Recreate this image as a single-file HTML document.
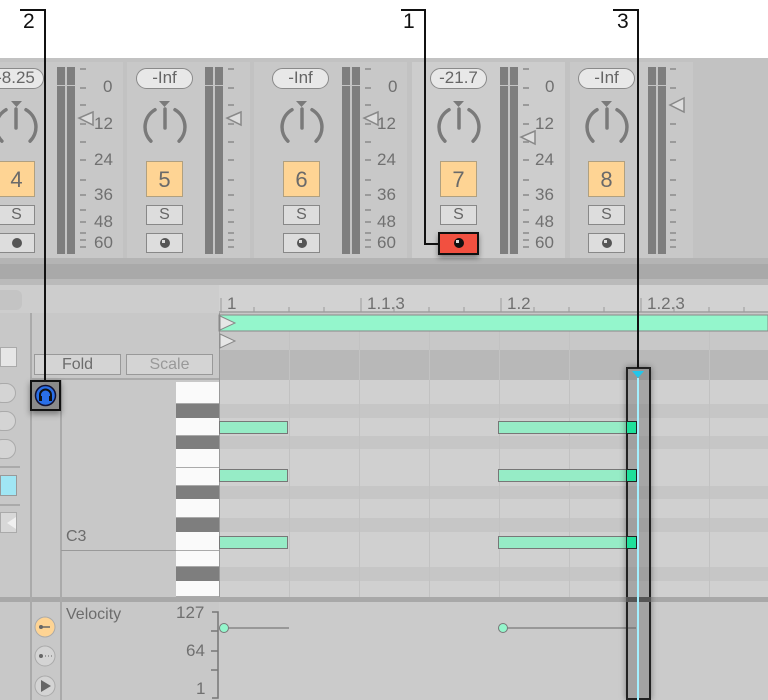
<!DOCTYPE html>
<html><head><meta charset="utf-8"><style>
*{margin:0;padding:0;box-sizing:border-box}
body{width:768px;height:700px;overflow:hidden;background:#fff;position:relative;font-family:"Liberation Sans",sans-serif;color:#707070}
.a{position:absolute}
.pill{position:absolute;top:68px;width:57px;height:21px;border:1.5px solid #8a8a8a;border-radius:11px;background:#e8e8e8;font-size:17px;text-align:center;line-height:18px;color:#666}
.num{position:absolute;top:161px;width:37px;height:36px;background:#fed494;border:1px solid #b0a080;font-size:22px;text-align:center;line-height:35px;color:#6a6a6a}
.sb{position:absolute;top:205px;width:37px;height:20px;background:#ddd;border:1px solid #888;font-size:16px;text-align:center;line-height:18px;color:#666}
.rb{position:absolute;top:233px;width:37px;height:20px;background:#ddd;border:1px solid #888}
.rb i{position:absolute;left:13px;top:4px;width:10px;height:10px;border-radius:50%;background:#555}
.rb i.h{background:linear-gradient(90deg,#555 50%,#555 50%);border:2px solid #555;background:#555}
.rb i.h:after{content:"";position:absolute;left:0;top:0;width:3px;height:3px;background:#ddd}
.met{position:absolute;top:67px;width:18px;height:187px;background:#7e7e7e}
.met:after{content:"";position:absolute;left:8px;top:0;width:2px;height:100%;background:#c4c4c4}
.met:before{content:"";position:absolute;left:0;top:18px;width:100%;height:1px;background:#c4c4c4}
.sc{position:absolute;font-size:17px;color:#707070}
.k{position:absolute;left:176px;width:43px}
.w{background:#fafafa;border-bottom:1px solid #aaa}
.b{background:#7e7e7e}
.note{position:absolute;height:13px;background:#96ecc6;border:1px solid #777}
.sq{position:absolute;width:11px;height:13px;background:#1ee09a;border:1.5px solid #222}
.vl{position:absolute;top:331px;width:1px;height:269px;background:#c2c2c2}
.lab{position:absolute;font-size:21px;color:#111}
.ln{position:absolute;background:#111}
</style></head><body>
<div class="a" style="left:0;top:58px;width:768px;height:204px;background:#c2c2c2"></div>
<div class="a" style="left:0;top:62px;width:123px;height:196px;background:#c8c8c8"></div>
<div class="a" style="left:127px;top:62px;width:123px;height:196px;background:#c8c8c8"></div>
<div class="a" style="left:254px;top:62px;width:153px;height:196px;background:#c8c8c8"></div>
<div class="a" style="left:412px;top:62px;width:153px;height:196px;background:#cdcdcd"></div>
<div class="a" style="left:570px;top:62px;width:123px;height:196px;background:#c8c8c8"></div>
<div class="a" style="left:0;top:258px;width:768px;height:6px;background:#b4b4b4"></div>
<div class="a" style="left:0;top:264px;width:768px;height:15px;background:#a9a9a9"></div>
<div class="a" style="left:0;top:279px;width:768px;height:6px;background:#bababa"></div>

<div class="pill" style="left:-13px">-8.25</div>
<div class="pill" style="left:136px">-Inf</div>
<div class="pill" style="left:272px">-Inf</div>
<div class="pill" style="left:430px">-21.7</div>
<div class="pill" style="left:578px">-Inf</div>

<svg class="a" style="left:0;top:0" width="768" height="260">
<g fill="none" stroke="#7a7a7a" stroke-width="3.5" stroke-linecap="round">
<path d="M6,109.7A20,20 0 0 0 1.9,141.1M26,109.7A20,20 0 0 1 30.1,141.1"/><line x1="16" y1="109" x2="16" y2="128"/>
<path d="M155,109.7A20,20 0 0 0 150.9,141.1M175,109.7A20,20 0 0 1 179.1,141.1"/><line x1="165" y1="109" x2="165" y2="128"/>
<path d="M292,109.7A20,20 0 0 0 287.9,141.1M312,109.7A20,20 0 0 1 316.1,141.1"/><line x1="302" y1="109" x2="302" y2="128"/>
<path d="M449,109.7A20,20 0 0 0 444.9,141.1M469,109.7A20,20 0 0 1 473.1,141.1"/><line x1="459" y1="109" x2="459" y2="128"/>
<path d="M597,109.7A20,20 0 0 0 592.9,141.1M617,109.7A20,20 0 0 1 621.1,141.1"/><line x1="607" y1="109" x2="607" y2="128"/>
</g>
<g fill="#7a7a7a"><path d="M11,101h11l-5.5,6z"/><path d="M159,101h11l-5.5,6z"/><path d="M296,101h11l-5.5,6z"/><path d="M453,101h11l-5.5,6z"/><path d="M601,101h11l-5.5,6z"/></g>
<g fill="#ddd" stroke="#888" stroke-width="1.5"><path d="M93,112l-14,6l14,7z"/><path d="M241,112l-14,6l14,7z"/><path d="M378,112l-14,6l14,7z"/><path d="M535,131l-14,6l14,7z"/><path d="M684,98l-14,7l14,7z"/></g>
</svg>

<div class="num" style="left:-2px">4</div><div class="num" style="left:146px">5</div><div class="num" style="left:283px">6</div><div class="num" style="left:440px">7</div><div class="num" style="left:588px">8</div>
<div class="sb" style="left:-2px">S</div><div class="sb" style="left:146px">S</div><div class="sb" style="left:283px">S</div><div class="sb" style="left:440px">S</div><div class="sb" style="left:588px">S</div>
<div class="rb" style="left:-2px"><i></i></div><div class="rb" style="left:146px"><i class="h"></i></div><div class="rb" style="left:283px"><i class="h"></i></div>
<div class="rb" style="left:438px;top:232px;width:41px;height:23px;background:#f25040;border:2px solid #111;box-shadow:0 3px 5px rgba(0,0,0,.4)"><i class="h" style="left:14px;top:4px;background:#111;border-color:#111"></i></div>
<div class="rb" style="left:588px"><i class="h"></i></div>

<div class="met" style="left:57px"></div><div class="met" style="left:205px"></div><div class="met" style="left:342px"></div><div class="met" style="left:500px"></div><div class="met" style="left:648px"></div>

<div class="sc" style="left:103px;top:77px">0</div><div class="sc" style="left:94px;top:114px">12</div><div class="sc" style="left:94px;top:150px">24</div><div class="sc" style="left:94px;top:185px">36</div><div class="sc" style="left:94px;top:212px">48</div><div class="sc" style="left:94px;top:233px">60</div>
<div class="sc" style="left:388px;top:77px">0</div><div class="sc" style="left:377px;top:114px">12</div><div class="sc" style="left:377px;top:150px">24</div><div class="sc" style="left:377px;top:185px">36</div><div class="sc" style="left:377px;top:212px">48</div><div class="sc" style="left:377px;top:233px">60</div>
<div class="sc" style="left:545px;top:77px">0</div><div class="sc" style="left:535px;top:114px">12</div><div class="sc" style="left:535px;top:150px">24</div><div class="sc" style="left:535px;top:185px">36</div><div class="sc" style="left:535px;top:212px">48</div><div class="sc" style="left:535px;top:233px">60</div>

<svg class="a" style="left:0;top:0" width="768" height="260"><g stroke="#8a8a8a" stroke-width="1.5">
<path d="M80,69h6M80,88h6M80,105h6M80,124h6M80,142h6M80,160h6M80,180h6M80,195h6M80,210h6M80,222h6M80,233h6M80,240h6M80,247h6"/>
<path d="M228,69h6M228,88h6M228,105h6M228,124h6M228,142h6M228,160h6M228,180h6M228,195h6M228,210h6M228,222h6M228,233h6M228,240h6M228,247h6"/>
<path d="M365,69h6M365,88h6M365,105h6M365,124h6M365,142h6M365,160h6M365,180h6M365,195h6M365,210h6M365,222h6M365,233h6M365,240h6M365,247h6"/>
<path d="M523,69h6M523,88h6M523,105h6M523,124h6M523,142h6M523,160h6M523,180h6M523,195h6M523,210h6M523,222h6M523,233h6M523,240h6M523,247h6"/>
<path d="M670,69h6M670,88h6M670,124h6M670,142h6M670,160h6M670,180h6M670,195h6M670,210h6M670,222h6M670,233h6M670,240h6M670,247h6"/>
</g></svg>

<div class="a" style="left:0;top:285px;width:768px;height:415px;background:#c8c8c8"></div>
<div class="a" style="left:0;top:285px;width:219px;height:28px;background:#cdcdcd"></div>
<div class="a" style="left:0;top:290px;width:22px;height:20px;border-radius:0 6px 6px 0;background:#c4c4c4"></div>
<div class="a" style="left:219px;top:285px;width:549px;height:28px;background:#d2d2d2"></div>
<div class="a" style="left:219px;top:313px;width:549px;height:37px;background:#c8c8c8"></div>
<div class="a" style="left:219px;top:350px;width:549px;height:30px;background:#b8b8b8"></div>
<div class="a" style="left:219px;top:380px;width:549px;height:220px;background:#d0d0d0"></div>
<div class="a" style="left:219px;top:404px;width:549px;height:14px;background:#c6c6c6"></div>
<div class="a" style="left:219px;top:436px;width:549px;height:13px;background:#c6c6c6"></div>
<div class="a" style="left:219px;top:486px;width:549px;height:13px;background:#c6c6c6"></div>
<div class="a" style="left:219px;top:518px;width:549px;height:14px;background:#c6c6c6"></div>
<div class="a" style="left:219px;top:567px;width:549px;height:14px;background:#c6c6c6"></div>
<div class="vl" style="left:289px"></div><div class="vl" style="left:359px"></div><div class="vl" style="left:429px"></div><div class="vl" style="left:499px"></div><div class="vl" style="left:569px"></div><div class="vl" style="left:709px"></div>
<div class="a" style="left:219px;top:313px;width:1px;height:387px;background:#999"></div>
<div class="a" style="left:0;top:597px;width:768px;height:5px;background:#a8a8a8"></div>
<div class="a" style="left:219px;top:602px;width:549px;height:98px;background:#cbcbcb"></div>

<div class="a" style="left:219px;top:311px;width:549px;height:1.5px;background:#aaa"></div>
<div class="sc" style="left:227px;top:294px">1</div>
<div class="sc" style="left:367px;top:294px">1.1.3</div>
<div class="sc" style="left:507px;top:294px">1.2</div>
<div class="sc" style="left:647px;top:294px">1.2.3</div>
<svg class="a" style="left:0;top:0" width="768" height="700"><g stroke="#999" stroke-width="1">
<path d="M221,298v14M254,307v5M289,307v5M324,307v5M361,298v14M394,307v5M429,307v5M464,307v5M501,298v14M534,307v5M569,307v5M604,307v5M641,298v14M674,307v5M709,307v5M744,307v5"/></g>
<rect x="219" y="315" width="549" height="16" fill="#94f6cc" stroke="#888" stroke-width="1"/>
<path d="M220,316l15,7l-15,7z M220,334l15,7l-15,7z" fill="#e6e6e6" stroke="#888"/>
</svg>

<div class="a" style="left:0;top:347px;width:17px;height:20px;background:#e6e6e6;border:1px solid #aaa"></div>
<div class="a" style="left:-8px;top:383px;width:24px;height:20px;border-radius:10px;background:#d4d4d4;border:1px solid #aaa"></div>
<div class="a" style="left:-8px;top:411px;width:24px;height:20px;border-radius:10px;background:#d4d4d4;border:1px solid #aaa"></div>
<div class="a" style="left:-8px;top:439px;width:24px;height:20px;border-radius:10px;background:#d4d4d4;border:1px solid #aaa"></div>
<div class="a" style="left:0;top:466px;width:20px;height:1.5px;background:#aaa"></div>
<div class="a" style="left:0;top:475px;width:17px;height:21px;background:#a0e6f4;border:1px solid #999"></div>
<div class="a" style="left:0;top:504px;width:20px;height:1.5px;background:#aaa"></div>
<div class="a" style="left:0;top:512px;width:17px;height:21px;background:#d8d8d8;border:1px solid #aaa"></div>
<svg class="a" style="left:0;top:512px" width="20" height="22"><path d="M16,5l-9,6l9,6z" fill="#f0f0f0"/></svg>
<div class="a" style="left:30px;top:313px;width:1.5px;height:387px;background:#aaa"></div>
<div class="a" style="left:60px;top:380px;width:1.5px;height:320px;background:#aaa"></div>
<div class="a" style="left:34px;top:354px;width:87px;height:21px;background:#d4d4d4;border:1px solid #999;font-size:16px;text-align:center;line-height:19px;color:#6c6c6c">Fold</div>
<div class="a" style="left:126px;top:354px;width:87px;height:21px;background:#d4d4d4;border:1px solid #999;font-size:16px;text-align:center;line-height:19px;color:#999">Scale</div>
<div class="a" style="left:30px;top:378px;width:189px;height:1.5px;background:#aaa"></div>
<div class="a" style="left:61px;top:550px;width:115px;height:1px;background:#999"></div>
<div class="a" style="left:66px;top:528px;font-size:16px;color:#6c6c6c">C3</div>

<div class="k w" style="top:382px;height:22px"></div><div class="k b" style="top:404px;height:14px"></div>
<div class="k w" style="top:418px;height:18px"></div><div class="k b" style="top:436px;height:13px"></div>
<div class="k w" style="top:449px;height:19px"></div><div class="k w" style="top:468px;height:18px"></div>
<div class="k b" style="top:486px;height:13px"></div><div class="k w" style="top:499px;height:19px"></div>
<div class="k b" style="top:518px;height:14px"></div><div class="k w" style="top:532px;height:19px"></div>
<div class="k w" style="top:551px;height:16px"></div><div class="k b" style="top:567px;height:14px"></div>
<div class="k w" style="top:581px;height:16px"></div>

<div class="note" style="left:219px;top:421px;width:69px"></div>
<div class="note" style="left:219px;top:469px;width:69px"></div>
<div class="note" style="left:219px;top:536px;width:69px"></div>
<div class="note" style="left:498px;top:421px;width:132px"></div>
<div class="note" style="left:498px;top:469px;width:132px"></div>
<div class="note" style="left:498px;top:536px;width:132px"></div>

<div class="a" style="left:66px;top:606px;font-size:16px;color:#6c6c6c">Velocity</div>
<div class="sc" style="left:176px;top:603px">127</div>
<div class="sc" style="left:186px;top:641px">64</div>
<div class="sc" style="left:196px;top:679px">1</div>
<svg class="a" style="left:0;top:0" width="768" height="700">
<path d="M212,612h6v86h-6M211,651h7M211,670h7M211,631h7" fill="none" stroke="#777" stroke-width="1.5"/>
<line x1="224" y1="628" x2="289" y2="628" stroke="#666"/><circle cx="224" cy="628" r="4.5" fill="#94f6cc" stroke="#777"/>
<line x1="503" y1="628" x2="636" y2="628" stroke="#666"/><circle cx="503" cy="628" r="4.5" fill="#94f6cc" stroke="#777"/>
<circle cx="45" cy="627" r="10" fill="#fed494" stroke="#aaa"/><path d="M40,627h10" stroke="#666" stroke-width="1.5"/><circle cx="41" cy="627" r="2" fill="#666"/>
<circle cx="45" cy="656" r="10" fill="#d4d4d4" stroke="#aaa"/><circle cx="41" cy="656" r="2" fill="#666"/><path d="M45,656h1M48,656h1M51,656h1" stroke="#666"/>
<circle cx="45" cy="686" r="10" fill="#d4d4d4" stroke="#aaa"/><path d="M41,680l10,6l-10,6z" fill="#666"/>
</svg>

<div class="a" style="left:626px;top:367px;width:25px;height:333px;background:rgba(90,90,90,.35);border:2px solid #222;box-shadow:0 0 6px rgba(0,0,0,.4)"></div>
<div class="a" style="left:626px;top:597px;width:25px;height:5px;background:#555"></div>
<div class="a" style="left:637px;top:378px;width:2px;height:322px;background:#a4f0ff"></div>
<svg class="a" style="left:630px;top:369px" width="16" height="10"><path d="M2,2h12l-6,7z" fill="#22c6ea"/></svg>
<div class="sq" style="left:626px;top:421px"></div><div class="sq" style="left:626px;top:469px"></div><div class="sq" style="left:626px;top:536px"></div>

<div class="a" style="left:30px;top:380px;width:31px;height:31px;background:#8a8a8a;border:2px solid #111;box-shadow:0 3px 6px rgba(0,0,0,.4)"></div>
<svg class="a" style="left:30px;top:380px" width="31" height="31"><circle cx="15.5" cy="15.5" r="10" fill="#2a6fe8" stroke="#113" stroke-width="1.5"/><path d="M10,19v-4a5.5,5.5 0 0 1 11,0v4" fill="none" stroke="#111" stroke-width="2"/><rect x="9" y="16" width="3" height="5" fill="#111"/><rect x="19" y="16" width="3" height="5" fill="#111"/></svg>

<div class="lab" style="left:23px;top:10px">2</div>
<div class="ln" style="left:20px;top:9px;width:25px;height:1.5px"></div>
<div class="ln" style="left:44px;top:9px;width:1.5px;height:372px"></div>
<div class="lab" style="left:403px;top:10px">1</div>
<div class="ln" style="left:401px;top:9px;width:25px;height:1.5px"></div>
<div class="ln" style="left:424px;top:9px;width:1.5px;height:235px"></div>
<div class="ln" style="left:424px;top:243px;width:15px;height:1.5px"></div>
<div class="lab" style="left:617px;top:10px">3</div>
<div class="ln" style="left:613px;top:9px;width:25px;height:1.5px"></div>
<div class="ln" style="left:637px;top:9px;width:1.5px;height:359px"></div>
</body></html>
